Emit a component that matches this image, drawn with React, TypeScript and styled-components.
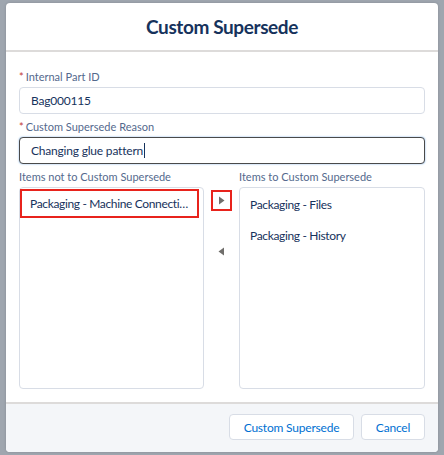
import React from "react";
import styled, { createGlobalStyle } from "styled-components";

const Global = createGlobalStyle`
  html, body { margin: 0; padding: 0; overflow: hidden; }
  body {
    background: #9fa6af;
    font-family: "Lato", "Open Sans", Arial, sans-serif;
    -webkit-font-smoothing: antialiased;
  }
  * { box-sizing: border-box; }
`;

const Backdrop = styled.div`
  width: 100vw;
  height: 100vh;
  padding: 3px 6px 3px 6px;
  background: #9fa6af;
  display: flex;
`;

const Modal = styled.div`
  flex: 1;
  background: #fff;
  border-radius: 4px;
  display: flex;
  flex-direction: column;
  overflow: hidden;
  box-shadow: 0 0 3px rgba(0, 0, 0, 0.16);
`;

const Header = styled.div`
  height: 49px;
  flex: none;
  display: flex;
  align-items: center;
  justify-content: center;
  border-bottom: 2px solid #dddbda;
  padding-bottom: 1px;
`;

const Title = styled.h2`
  margin: 0;
  font-size: 19px;
  font-weight: 700;
  color: #16325c;
  letter-spacing: -0.4px;
`;

const Body = styled.div`
  flex: 1;
  padding: 16px 13px 13px 13px;
  display: flex;
  flex-direction: column;
`;

const Label = styled.div`
  font-size: 11px;
  line-height: 18px;
  color: #54698d;
  height: 18px;
  margin-bottom: 1px;
`;

const Req = styled.abbr`
  color: #c23934;
  text-decoration: none;
  margin-right: 2px;
  border: none;
`;

const Field = styled.div<{ $focused?: boolean }>`
  height: 27px;
  border: 1px solid ${(p) => (p.$focused ? "#4a4a4a" : "#d8dde6")};
  border-radius: 4px;
  padding: 0 11px;
  display: flex;
  align-items: center;
  font-size: 12px;
  letter-spacing: -0.2px;
  color: #16325c;
  background: #fff;
  margin-bottom: 4px;
  box-shadow: ${(p) => (p.$focused ? "0 0 2px #7fb0e6" : "none")};
`;

const Value = styled.span`
  color: #16325c;
`;

const Caret = styled.span`
  display: inline-block;
  width: 1px;
  height: 15px;
  background: #16325c;
  margin-left: 1px;
`;

const Dual = styled.div`
  flex: 1;
  display: grid;
  grid-template-columns: 185px 35px 186px;
`;

const Column = styled.div`
  display: flex;
  flex-direction: column;
`;

const ListBox = styled.ul`
  flex: 1;
  margin: 0;
  list-style: none;
  border: 1px solid #d8dde6;
  border-radius: 4px;
  padding: 1px 0 0 0;
`;

const Item = styled.li<{ $selected?: boolean }>`
  height: ${(p) => (p.$selected ? "29px" : "31px")};
  display: flex;
  align-items: center;
  padding: 0 ${(p) => (p.$selected ? "8px" : "10px")};
  margin-right: ${(p) => (p.$selected ? "4px" : "0")};
  margin-bottom: ${(p) => (p.$selected ? "2px" : "0")};
  font-size: 12px;
  letter-spacing: -0.35px;
  color: #16325c;
  border: ${(p) => (p.$selected ? "2px solid #e8231c" : "none")};
  white-space: nowrap;
  overflow: hidden;
`;

const Ellipsis = styled.span`
  overflow: hidden;
  text-overflow: ellipsis;
  white-space: nowrap;
`;

const Buttons = styled.div`
  display: flex;
  flex-direction: column;
  align-items: center;
  padding-top: 22px;
  gap: 30px;
`;

const MoveButton = styled.button<{ $highlight?: boolean }>`
  width: 21px;
  height: 21px;
  padding: 0;
  margin: 0;
  display: flex;
  align-items: center;
  justify-content: center;
  background: #fff;
  border: 2px solid ${(p) => (p.$highlight ? "#e8231c" : "transparent")};
  cursor: pointer;
`;

const Footer = styled.div`
  flex: none;
  height: 50px;
  background: #f4f6f9;
  border-top: 2px solid #dddbda;
  display: flex;
  align-items: center;
  justify-content: flex-end;
  gap: 7px;
  padding: 0 13px 2px 0;
`;

const Button = styled.button<{ $w: number }>`
  width: ${(p) => p.$w}px;
  height: 26px;
  padding: 0;
  margin: 0;
  white-space: nowrap;
  background: #fff;
  border: 1px solid #d8dde6;
  border-radius: 4px;
  color: #0070d2;
  font-family: inherit;
  font-size: 12px;
  letter-spacing: -0.2px;
  cursor: pointer;
`;

const Tri = ({ dir }: { dir: "left" | "right" }) => (
  <svg width="7" height="9" viewBox="0 0 7 9">
    {dir === "right" ? (
      <polygon points="1,0.5 6.5,4.5 1,8.5" fill="#706e6b" />
    ) : (
      <polygon points="6,0.5 0.5,4.5 6,8.5" fill="#706e6b" />
    )}
  </svg>
);

export default function App() {
  return (
    <>
      <Global />
      <Backdrop>
        <Modal>
          <Header>
            <Title>Custom Supersede</Title>
          </Header>
          <Body>
            <Label>
              <Req>*</Req>Internal Part ID
            </Label>
            <Field>
              <Value>Bag000115</Value>
            </Field>
            <Label>
              <Req>*</Req>Custom Supersede Reason
            </Label>
            <Field $focused>
              <Value>Changing glue pattern</Value>
              <Caret />
            </Field>
            <Dual>
              <Column>
                <Label>Items not to Custom Supersede</Label>
                <ListBox>
                  <Item $selected>
                    <Ellipsis>Packaging - Machine Connections</Ellipsis>
                  </Item>
                </ListBox>
              </Column>
              <Buttons>
                <MoveButton $highlight aria-label="Move right">
                  <Tri dir="right" />
                </MoveButton>
                <MoveButton aria-label="Move left">
                  <Tri dir="left" />
                </MoveButton>
              </Buttons>
              <Column>
                <Label>Items to Custom Supersede</Label>
                <ListBox>
                  <Item>Packaging - Files</Item>
                  <Item>Packaging - History</Item>
                </ListBox>
              </Column>
            </Dual>
          </Body>
          <Footer>
            <Button $w={125}>Custom Supersede</Button>
            <Button $w={64}>Cancel</Button>
          </Footer>
        </Modal>
      </Backdrop>
    </>
  );
}
